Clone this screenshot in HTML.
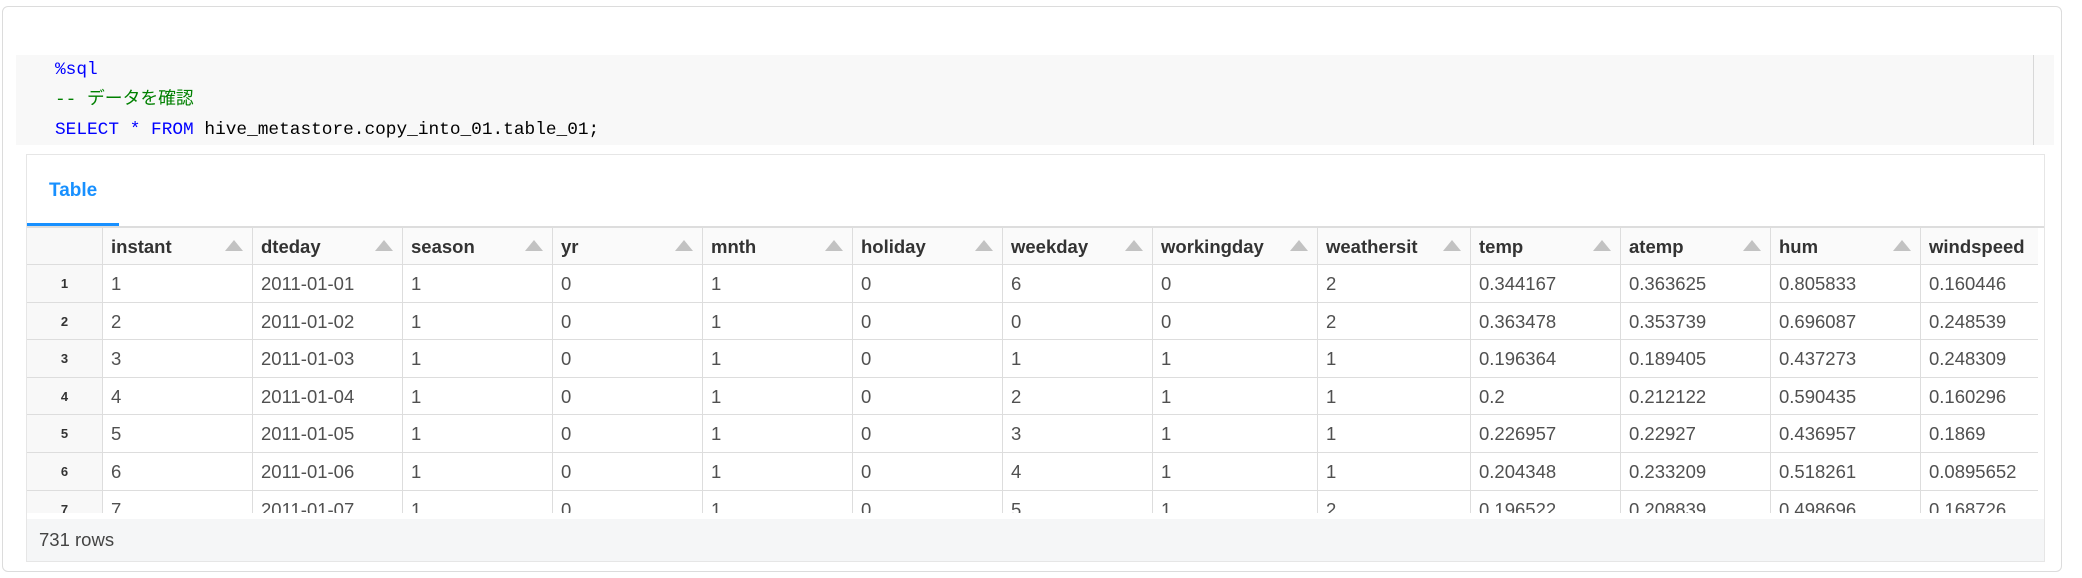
<!DOCTYPE html>
<html><head><meta charset="utf-8"><style>
html,body{margin:0;padding:0;background:#fff;width:2082px;height:578px;overflow:hidden;position:relative;font-family:"Liberation Sans","Noto Sans CJK JP",sans-serif}
.abs{position:absolute}
.card{left:2px;top:6px;width:2060px;height:566px;border:1px solid #dcdcdc;border-radius:6px;box-sizing:border-box}
.code{left:16px;top:55px;width:2038px;height:90px;background:#f8f8f8}
.vline{left:2033px;top:55px;width:1px;height:90px;background:#d8d8d8}
.cl{position:absolute;left:55px;height:30px;line-height:30px;font-family:"Liberation Mono","Noto Sans CJK JP",monospace;font-size:17.8px;white-space:pre;color:#000}
.panel{left:26px;top:154px;width:2019px;height:408px;border:1px solid #e6e6e6;box-sizing:border-box}
.tab{left:49px;top:180px;color:#1890ff;font-size:19px;font-weight:bold}
.ul{left:27px;top:223px;width:92px;height:3px;background:#1890ff}
.gl{left:27px;top:226px;width:2017px;height:2px;background:#ddd}
.tbl{left:27px;top:228px;width:2011px;height:285px;overflow:hidden}
.c{position:absolute;box-sizing:border-box;border-right:1px solid #ddd;border-bottom:1px solid #ddd;font-size:18.5px;color:#505050;padding-left:8px;white-space:nowrap;overflow:hidden}
.h{font-weight:bold;color:#333;font-size:18.5px}
.ix{background:#f8f8f8;text-align:center;padding-left:0;font-weight:bold;font-size:13px;color:#333}
.tri{position:absolute;width:0;height:0;border-left:9.5px solid transparent;border-right:9.5px solid transparent;border-bottom:11px solid #c2c2c2;top:12px}
.foot{left:27px;top:519px;width:2017px;height:42px;background:#f5f6f7;font-size:18.5px;color:#444}
</style></head><body>
<div class="abs card"></div>
<div class="abs code"></div>
<div class="abs vline"></div>
<div class="cl" style="top:55px;color:#0000ff">%sql</div>
<div class="cl" style="top:85px;color:#008000">-- データを確認</div>
<div class="cl" style="top:115px"><span style="color:#0000ff">SELECT</span> <span style="color:#0000ff">*</span> <span style="color:#0000ff">FROM</span> hive_metastore.copy_into_01.table_01;</div>
<div class="abs panel"></div>
<div class="abs tab">Table</div>
<div class="abs gl"></div>
<div class="abs ul"></div>
<div class="abs tbl" id="t"></div>
<div class="abs foot"><span style="position:absolute;left:12px;top:10px">731 rows</span></div>
<script>
var cols=["instant","dteday","season","yr","mnth","holiday","weekday","workingday","weathersit","temp","atemp","hum","windspeed"];
var w=[150,150,150,150,150,150,150,165,153,150,150,150,150];
var rows=[
[1,"2011-01-01",1,0,1,0,6,0,2,"0.344167","0.363625","0.805833","0.160446"],
[2,"2011-01-02",1,0,1,0,0,0,2,"0.363478","0.353739","0.696087","0.248539"],
[3,"2011-01-03",1,0,1,0,1,1,1,"0.196364","0.189405","0.437273","0.248309"],
[4,"2011-01-04",1,0,1,0,2,1,1,"0.2","0.212122","0.590435","0.160296"],
[5,"2011-01-05",1,0,1,0,3,1,1,"0.226957","0.22927","0.436957","0.1869"],
[6,"2011-01-06",1,0,1,0,4,1,1,"0.204348","0.233209","0.518261","0.0895652"],
[7,"2011-01-07",1,0,1,0,5,1,2,"0.196522","0.208839","0.498696","0.168726"]];
var h='',rh=37.6,hh=37;
h+='<div class="c ix" style="left:0;top:0;width:76px;height:'+hh+'px"></div>';
var x=76;
for(var i=0;i<cols.length;i++){h+='<div class="c h" style="left:'+x+'px;top:0;width:'+w[i]+'px;height:'+hh+'px;line-height:'+hh+'px;background:#fafafa">'+cols[i]+(i<12?'<div class="tri" style="right:9px"></div>':'')+'</div>';x+=w[i];}
for(var r=0;r<rows.length;r++){var y=hh+r*rh;
h+='<div class="c ix" style="left:0;top:'+y+'px;width:76px;height:'+rh+'px;line-height:'+rh+'px">'+(r+1)+'</div>';x=76;
for(var i=0;i<cols.length;i++){h+='<div class="c" style="left:'+x+'px;top:'+y+'px;width:'+w[i]+'px;height:'+rh+'px;line-height:'+rh+'px">'+rows[r][i]+'</div>';x+=w[i];}}
document.getElementById('t').innerHTML=h;
</script>
</body></html>
